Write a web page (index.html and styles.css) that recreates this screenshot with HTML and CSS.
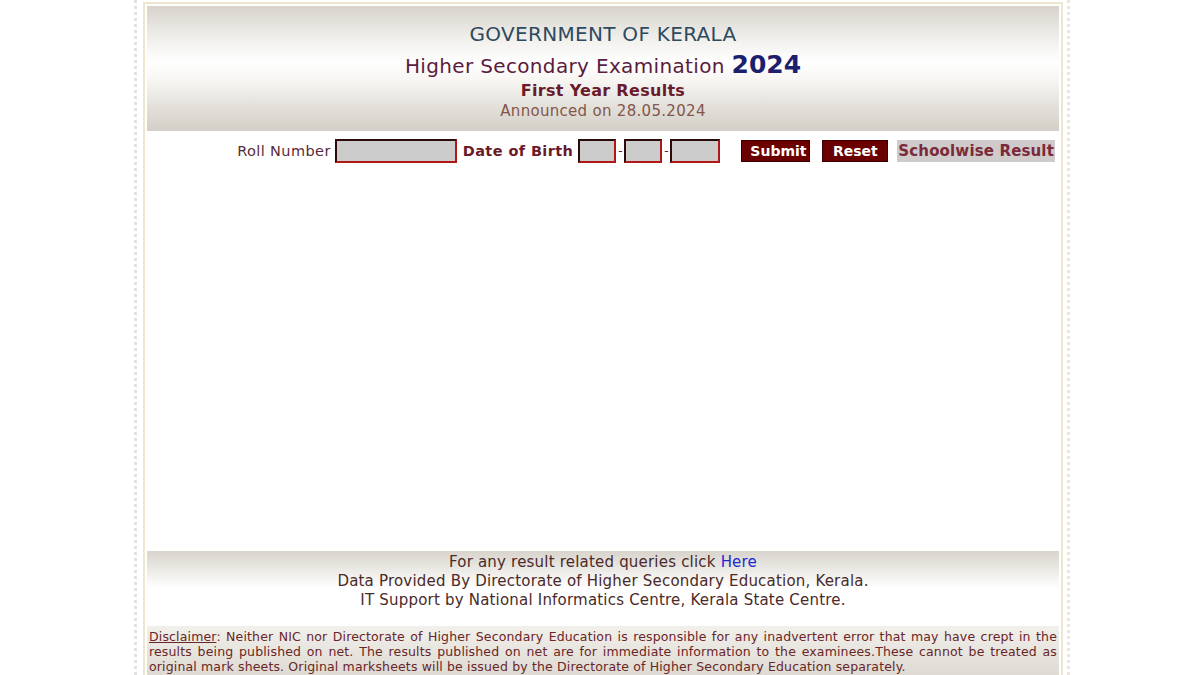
FILE: index.html
```html
<!DOCTYPE html>
<html>
<head>
<meta charset="utf-8">
<title>Kerala HSE Results 2024</title>
<link rel="stylesheet" href="styles.css">
</head>
<body>
<div class="page">
  <div class="frame">
    <div class="header">
      <div class="gov">GOVERNMENT OF KERALA</div>
      <div class="exam">Higher Secondary Examination <span class="year">2024</span></div>
      <div class="first">First Year Results</div>
      <div class="announced">Announced on 28.05.2024</div>
    </div>
    <div class="form">
      <span class="lbl">Roll Number</span>
      <span class="inp roll"></span>
      <span class="lbl bold">Date of Birth</span>
      <span class="inp dd"></span><span class="dash">-</span><span class="inp mm"></span><span class="dash">-</span><span class="inp yy"></span>
      <span class="btn submit">Submit</span>
      <span class="btn reset">Reset</span>
      <span class="school">Schoolwise Result</span>
    </div>
    <div class="body"></div>
    <div class="footer">
      <div>For any result related queries click <span class="here">Here</span></div>
      <div>Data Provided By Directorate of Higher Secondary Education, Kerala.</div>
      <div>IT Support by National Informatics Centre, Kerala State Centre.</div>
    </div>
    <div class="disclaimer"><span class="u">Disclaimer</span>: Neither NIC nor Directorate of Higher Secondary Education is responsible for any inadvertent error that may have crept in the results being published on net. The results published on net are for immediate information to the examinees.These cannot be treated as original mark sheets. Original marksheets will be issued by the Directorate of Higher Secondary Education separately.</div>
  </div>
</div>
</body>
</html>
```
FILE: styles.css
```css
html, body {
  margin: 0;
  padding: 0;
  background: #fff;
  height: 675px;
  overflow: hidden;
}
body {
  font-family: "DejaVu Sans", Verdana, sans-serif;
}
.page {
  margin-left: 134px;
  width: 936px;
  height: 675px;
  border-left: 3px dotted #e2e2e2;
  border-right: 3px dotted #ece6dc;
  box-sizing: border-box;
  padding: 2px 0 0 6px;
}
.frame {
  width: 920px;
  height: 700px;
  border: 2px solid #efe6cf;
  border-bottom: none;
  box-sizing: border-box;
  padding: 2px 2px 0 2px;
  background: #fff;
  display: flex;
  flex-direction: column;
}
.header {
  height: 125px;
  background: linear-gradient(#d7d3cb 0%, #f2f1ee 28%, #ffffff 45%, #f6f5f2 60%, #e2dfd9 82%, #d3cfc7 100%);
  text-align: center;
  display: flex;
  flex-direction: column;
  align-items: center;
  padding-top: 16px;
  box-sizing: border-box;
}
.gov {
  font-size: 20px;
  color: #2d4a5e;
  line-height: 24px;
  letter-spacing: 0.3px;
}
.exam {
  font-size: 20px;
  color: #5a1c3c;
  line-height: 32px;
  margin-top: 3px;
  letter-spacing: 0.35px;
}
.year {
  font-size: 25px;
  font-weight: bold;
  color: #1c1e6e;
  letter-spacing: 0;
}
.first {
  font-size: 16px;
  font-weight: bold;
  color: #6a1a2a;
  line-height: 20px;
  margin-top: -1px;
  letter-spacing: 0.3px;
}
.announced {
  font-size: 15px;
  color: #83564a;
  line-height: 20px;
  letter-spacing: 0.3px;
}
.form {
  display: flex;
  align-items: center;
  justify-content: flex-end;
  height: 40px;
  padding-right: 4px;
  font-size: 14px;
  color: #5a2a3a;
}
.lbl { margin-right: 4px; font-size: 14.5px; letter-spacing: 0.4px; }
.lbl.bold { font-weight: bold; color: #6a1a2a; margin-left: 6px; margin-right: 5px; letter-spacing: 0.4px; }
.inp {
  display: inline-block;
  height: 24px;
  background: #cccccc;
  border: 2px solid #2a0a0a;
  border-right-color: #b01818;
  border-bottom-color: #b01818;
  box-sizing: border-box;
}
.roll { width: 122px; }
.dd { width: 38px; }
.mm { width: 38px; }
.yy { width: 50px; }
.dash { color: #6a1a2a; width: 8px; text-align: center; font-size: 12px; }
.btn {
  display: inline-block;
  background: #6a0000;
  color: #fff;
  font-weight: bold;
  font-size: 14px;
  height: 22px;
  line-height: 20px;
  padding: 0 8px;
  border: 1px solid #3a0000;
  box-sizing: border-box;
  text-align: center;
}
.submit { margin-left: 21px; width: 69px; }
.reset { margin-left: 12px; width: 66px; }
.school {
  margin-left: 9px;
  background: #cfcbcb;
  color: #7a2a3a;
  font-weight: bold;
  font-size: 15px;
  padding: 1px 1px;
  line-height: 20px;
  letter-spacing: 0.15px;
}
.body { height: 380px; }
.footer {
  height: 62px;
  background: linear-gradient(#d8d4cc 0%, #f2f1ee 40%, #ffffff 60%, #ffffff 100%);
  text-align: center;
  font-size: 15px;
  color: #4a2a2a;
  line-height: 19px;
  padding-top: 2px;
  box-sizing: border-box;
  letter-spacing: 0.2px;
}
.here { color: #1c2ad0; }
.disclaimer {
  margin-top: 13px;
  padding: 3px 2px 0 2px;
  font-size: 12.5px;
  line-height: 15px;
  color: #6a2626;
  text-align: justify;
  background: linear-gradient(#f2f0ec, #d8d4cc);
  height: 60px;
  letter-spacing: 0.15px;
}
.u { text-decoration: underline; }
```
